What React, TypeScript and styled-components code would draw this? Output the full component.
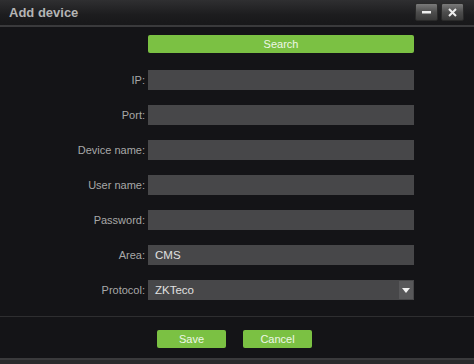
import * as React from 'react';
import styled, { createGlobalStyle } from 'styled-components';

const GlobalStyle = createGlobalStyle`
  html, body {
    margin: 0;
    padding: 0;
    background: #141417;
  }
  * {
    box-sizing: border-box;
  }
`;

const Window = styled.div`
  width: 474px;
  height: 364px;
  display: flex;
  flex-direction: column;
  background-color: #141417;
  font-family: 'Liberation Sans', Arial, sans-serif;
  overflow: hidden;
`;

const TitleBar = styled.div`
  height: 27px;
  display: flex;
  align-items: center;
  justify-content: space-between;
  padding: 0 9px 1px 9px;
  background: linear-gradient(#2f2f31, #1c1c1e 60%, #18181a);
  border-bottom: 2px solid #3a3a3c;
`;

const Title = styled.span`
  color: #b4b4b4;
  font-size: 13px;
  font-weight: 700;
`;

const WinButtons = styled.div`
  display: flex;
  gap: 3px;
  margin-right: 1px;
`;

const WinButton = styled.div`
  width: 23px;
  height: 18px;
  display: flex;
  align-items: center;
  justify-content: center;
  border: 1px solid #2a2a2a;
  border-radius: 2px;
  background: linear-gradient(#7a7a7a, #4e4e4e 50%, #3a3a3a);
`;

const Body = styled.div`
  flex: 1;
  padding-top: 8px;
`;

const Form = styled.div`
  display: grid;
  grid-template-columns: 145px 266px;
  column-gap: 3px;
  row-gap: 15px;
  align-items: center;
`;

const SearchButton = styled.div`
  grid-column: 2;
  height: 18px;
  margin-bottom: 2px;
  display: flex;
  align-items: center;
  justify-content: center;
  background-color: #7bc143;
  border-radius: 2px;
  color: #eef7e6;
  font-size: 11px;
`;

const Label = styled.label`
  text-align: right;
  color: #a8a8a8;
  font-size: 11px;
`;

const Field = styled.div`
  height: 20px;
  display: flex;
  align-items: center;
  justify-content: space-between;
  padding-left: 7px;
  background-color: #474749;
  color: #e0e0e0;
  font-size: 11.5px;
`;

const DropArrow = styled.div`
  width: 14px;
  height: 18px;
  margin-right: 1px;
  display: flex;
  align-items: center;
  justify-content: center;
  background-color: #58585a;
`;

const Footer = styled.div`
  margin-top: 16px;
  border-top: 1px solid #2e2e30;
  padding: 13px 0 0 157px;
  display: flex;
  gap: 17px;
`;

const ActionButton = styled.div`
  width: 69px;
  height: 18px;
  display: flex;
  align-items: center;
  justify-content: center;
  background-color: #7bc143;
  border-radius: 2px;
  color: #eef7e6;
  font-size: 11px;
`;

const BottomEdge = styled.div`
  height: 6px;
  border-top: 2px solid #3a3a3c;
  background-color: #2a2a2c;
`;

const fields: { label: string; value?: string; select?: boolean }[] = [
  { label: 'IP:' },
  { label: 'Port:' },
  { label: 'Device name:' },
  { label: 'User name:' },
  { label: 'Password:' },
  { label: 'Area:', value: 'CMS' },
  { label: 'Protocol:', value: 'ZKTeco', select: true },
];

const App = (): JSX.Element => (
  <>
    <GlobalStyle />
    <Window>
      <TitleBar>
        <Title>Add device</Title>
        <WinButtons>
          <WinButton>
            <svg width="9" height="3" viewBox="0 0 9 3">
              <rect x="0" y="0" width="9" height="2.5" fill="#eee" />
            </svg>
          </WinButton>
          <WinButton>
            <svg width="9" height="9" viewBox="0 0 9 9">
              <path d="M1 1 L8 8 M8 1 L1 8" stroke="#eee" strokeWidth="2" />
            </svg>
          </WinButton>
        </WinButtons>
      </TitleBar>
      <Body>
        <Form>
          <SearchButton>Search</SearchButton>
          {fields.map(f => (
            <React.Fragment key={f.label}>
              <Label>{f.label}</Label>
              <Field>
                <span>{f.value}</span>
                {f.select && (
                  <DropArrow>
                    <svg width="8" height="5" viewBox="0 0 8 5">
                      <path d="M0 0 H8 L4 5 Z" fill="#f2f2f2" />
                    </svg>
                  </DropArrow>
                )}
              </Field>
            </React.Fragment>
          ))}
        </Form>
        <Footer>
          <ActionButton>Save</ActionButton>
          <ActionButton>Cancel</ActionButton>
        </Footer>
      </Body>
      <BottomEdge />
    </Window>
  </>
);

export default App;
